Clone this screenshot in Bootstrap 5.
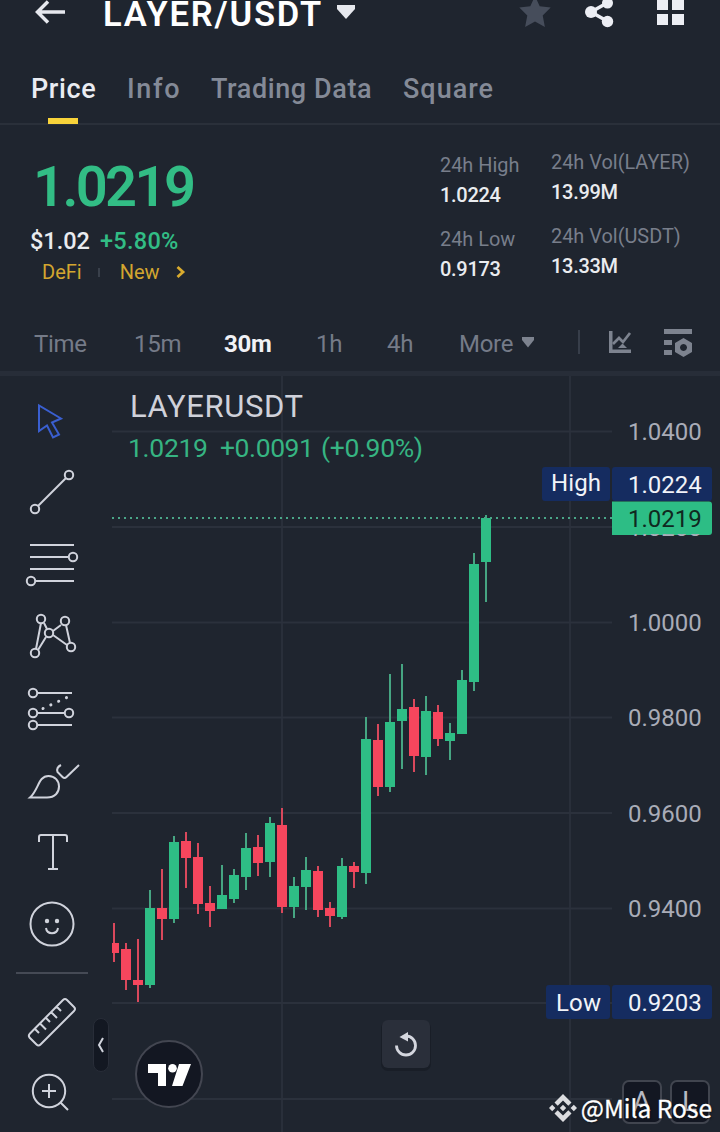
<!DOCTYPE html>
<html lang="en">
<head>
<meta charset="utf-8">
<meta name="viewport" content="width=device-width, initial-scale=1">
<title>LAYER/USDT</title>
<link href="https://cdn.jsdelivr.net/npm/bootstrap@5.3.0/dist/css/bootstrap.min.css" rel="stylesheet">
<style>
  body { background:#1f252f; color:#eaecef; font-family:Roboto,"Liberation Sans",sans-serif; width:720px; height:1132px; overflow:hidden; line-height:1; white-space:nowrap; }
  svg { display:block; flex:none; }
  .top-bar { height:52px; }
  .pair { font-size:34.5px; font-weight:600; letter-spacing:1.8px; color:#fff; line-height:40px; margin-top:-6px; width:234px; margin-left:37px; }
  .tabs { height:73px; border-bottom:2px solid #2a303a; font-size:27px; font-weight:500; letter-spacing:.6px; color:#848a97; padding-left:31px; line-height:32px; padding-top:21px; }
  .tab-on { color:#eaecf2; position:relative; }
  .tab-on::after { content:""; position:absolute; left:17px; top:45px; width:30px; height:6px; background:#f8d33a; }
  .summary { height:187px; }
  .up { color:#32bd85; }
  .quote { width:440px; padding-left:31px; }
  .last-price { font-size:56px; font-weight:600; line-height:60px; margin-top:32px; letter-spacing:-2.6px; padding-left:2px; }
  .fiat { font-size:23.5px; font-weight:500; line-height:28px; margin-top:10px; gap:10px; margin-left:-1px; }
  .fiat .up { letter-spacing:.3px; }
  .tags { font-size:20px; line-height:24px; margin-top:5px; color:#d3a62f; padding-left:11px; }
  .tags .bar { width:2px; height:9px; background:#39404b; }
  .stat-name { font-size:19.9px; line-height:24px; color:#787e8b; }
  .stat-num { font-size:20px; line-height:24px; font-weight:500; letter-spacing:-.3px; margin-top:5px; margin-bottom:21px; }
  .intervals { height:64px; border-bottom:5px solid #272d38; font-size:24px; color:#757b88; padding-left:34px; }
  .intervals div { padding-top:4px; letter-spacing:-.3px; }
  .intervals .on { color:#f1f2f6; font-weight:700; }
  .chart { height:756px; }
  .tools { width:104px; padding-top:9px; position:relative; }
  .tools svg { fill:none; stroke:#d0d3dc; stroke-width:2; }
  .tools .rule { height:2px; background:#454a55; margin:11px 16px; }
  .handle { position:absolute; left:93px; top:642px; width:16px; height:54px; border-radius:8px; background:#131822; border:1px solid #282d38; z-index:2; }
  .plot { position:relative; width:616px; }
  .plot text { font-family:Roboto,"Liberation Sans",sans-serif; }
  .watermark { position:absolute; right:8px; bottom:5px; font:24.500px/38px "Noto Sans CJK SC",sans-serif; color:#fff; gap:4px; text-shadow:1px 1px 2px #0008; -webkit-text-stroke:.3px #fff; }
</style>
</head>
<body>
<header class="top-bar d-flex">
  <svg width="66" height="28" fill="none" stroke="#e6e8ee" stroke-width="3.5"><path d="M65 12H38M48 1.500 37.500 12 48 22.500"/></svg>
  <div class="pair">LAYER/USDT</div>
  <svg width="382" height="30" viewBox="337 0 382 30">
    <path d="M337 5h18v4l-9 10-9-10z" fill="#e6e8ee"/>
    <path d="M535-4l4.700 10.200 11 1.300-8 8 2.200 11.500L535 21.500 525.100 27l2.200-11.500-8-8 11-1.300z" fill="#464d5b"/>
    <g fill="#eceef4"><circle cx="591" cy="12" r="6"/><circle cx="607.500" cy="3" r="5.500"/><circle cx="607.500" cy="21.500" r="5.700"/><path d="M607 3 591 12l16 9" fill="none" stroke="#eceef4" stroke-width="3.500"/>
    <path d="M657-2h11v12h-11zM672-2h12v12h-12zM657 14h11v11h-11zM672 14h12v11h-12z"/></g>
  </svg>
</header>
<nav class="tabs d-flex">
  <div class="tab-on" style="width:96px">Price</div><div style="width:84px;letter-spacing:1.700px">Info</div><div style="width:192px">Trading Data</div><div style="letter-spacing:1px">Square</div>
</nav>
<section class="summary d-flex">
  <div class="quote">
    <div class="last-price up">1.0219</div>
    <div class="fiat d-flex"><span>$1.02</span><span class="up">+5.80%</span></div>
    <div class="tags d-flex align-items-center"><span>DeFi</span><i class="bar ms-3"></i><span class="ms-3 ps-1">New</span>
      <svg class="ms-3" width="10" height="14" fill="none" stroke="#d9ab2e" stroke-width="2.800"><path d="M1.500 2 7 7 1.500 12"/></svg></div>
  </div>
  <div style="width:111px;padding-top:29px">
    <div class="stat-name">24h High</div><div class="stat-num">1.0224</div>
    <div class="stat-name">24h Low</div><div class="stat-num">0.9173</div>
  </div>
  <div style="padding-top:26px">
    <div class="stat-name">24h Vol(LAYER)</div><div class="stat-num">13.99M</div>
    <div class="stat-name">24h Vol(USDT)</div><div class="stat-num">13.33M</div>
  </div>
</section>
<nav class="intervals d-flex align-items-center">
  <div style="width:100px">Time</div><div style="width:90px">15m</div><div class="on" style="width:92px">30m</div><div style="width:71px">1h</div><div style="width:72px">4h</div><div style="width:61px">More</div>
  <svg width="200" height="60" viewBox="520 312 200 60" fill="#7d838f">
    <path d="M522 337h12v3l-6 7.500-6-7.500z"/><path d="M578 330h2v24h-2z" fill="#373e4a"/>
    <path d="M609 331h3.500v18.500H631V353h-22z"/><path d="M613 344l6-6 4 4 7-9" fill="none" stroke="#7d838f" stroke-width="2.700"/><path d="M618 348l4.500-4.500 4.500 4.500z"/>
    <path d="M664 329h28v5h-28zM664 340h8v5h-8zM664 350h8v5h-8z"/><path fill-rule="evenodd" d="M683.500 338l8.500 5v9l-8.500 5-8.500-5v-9zM683.500 344a3.500 3.500 0 1 0 .01 0z"/>
  </svg>
</nav>
<main class="chart d-flex">
  <aside class="tools">
    <svg width="104" height="72" viewBox="0 385 104 72"><path d="M39 405.500v25.500l8-5.500 6 12 6-3-7-12 9-4z" style="stroke:#3a5fd0"/></svg>
    <svg width="104" height="72" viewBox="0 457 104 72"><path d="M38 506l28-28"/><circle cx="35" cy="509" r="4.200"/><circle cx="69" cy="475" r="4.200"/></svg>
    <svg width="104" height="72" viewBox="0 529 104 72"><path d="M30 545h44M30 557h38M30 569h44M36 581h38"/><circle cx="73" cy="557" r="4.200"/><circle cx="31" cy="581" r="4.200"/></svg>
    <svg width="104" height="72" viewBox="0 601 104 72"><path d="M41 623l-5 26M44 623l3 6M38 650l8-13M53 631l8-6M66 625l4 18M53 635l14 10"/><circle cx="41" cy="619" r="4.200"/><circle cx="65" cy="621" r="4.200"/><circle cx="49" cy="633" r="4.200"/><circle cx="35" cy="653" r="4.200"/><circle cx="71" cy="647" r="4.200"/></svg>
    <svg width="104" height="72" viewBox="0 673 104 72"><path d="M37 693h35M37 713h27M37 725h35"/><path d="M43 708.500l26-12" stroke-width="3" stroke-linecap="round" stroke-dasharray=".1 8.500"/><circle cx="33" cy="693" r="4.200"/><circle cx="33" cy="713" r="4.200"/><circle cx="69" cy="713" r="4.200"/><circle cx="33" cy="725" r="4.200"/></svg>
    <svg width="104" height="72" viewBox="0 745 104 72"><path d="M30 797.500c9-8 8-21.500 18.500-21.500 6.500 0 10.500 5 10.500 10.500 0 6-4 11-12 11zM61 765c-4 2-4.500 4-3.500 7l5 5q2 2 4 0L79 765"/></svg>
    <svg width="104" height="72" viewBox="0 817 104 72"><path d="M39 842v-5q0-2 2-2h24q2 0 2 2v5M53 835v34M48 869h10"/></svg>
    <svg width="104" height="72" viewBox="0 889 104 72"><circle cx="52" cy="924" r="21.500"/><path d="M46 928c1 7 11 7 12 0"/><g fill="#d0d3dc" stroke="none"><circle cx="47" cy="921" r="2.200"/><circle cx="57" cy="921" r="2.200"/></g></svg>
    <div class="rule"></div>
    <svg width="104" height="72" viewBox="0 985 104 72"><path d="M30 1033.500 63 1000q2-2 4 0l7 7q2 2 0 4l-33.500 33.500q-2 2-4 0l-7-7q-1.500-2 .5-4zM35 1029l4 4M40 1023.500l6 6M46 1018l4 4M51 1012l6 6M57 1007l4 4"/></svg>
    <svg width="104" height="72" viewBox="0 1057 104 72"><circle cx="49" cy="1091" r="16.200"/><path d="M49 1084v14M42 1091h14M60.500 1102.500l7.500 7.500"/></svg>
    <div class="handle"><svg width="14" height="52"><path d="M9 19 5 26l4 7"/></svg></div>
  </aside>
  <div class="plot">
    <svg width="616" height="756" viewBox="104 376 616 756">
      <path d="M112 431.500h500M112 527h500M112 622.500h500M112 717.500h500M112 813h500M112 908.500h500M112 1003h500M112 1099h500M282 376v756M570 376v756" stroke="#2b313c" stroke-width="1.800" fill="none"/>
      <g id="candles"></g>
      <path d="M112 518h500" stroke="#4aa688" stroke-width="2" stroke-dasharray="2 4"/>
      <g font-size="31" fill="#cfd1da"><text x="130" y="417" textLength="173">LAYERUSDT</text></g>
      <g font-size="26.500" fill="#36b482"><text x="128" y="457" textLength="80">1.0219</text><text x="220" y="457" textLength="94">+0.0091</text><text x="321" y="457" textLength="102">(+0.90%)</text></g>
      <g fill="#152c60"><rect x="542" y="467" width="68" height="34" rx="3"/><rect x="612" y="467" width="100" height="34" rx="3"/><rect x="546" y="985" width="64" height="34" rx="3"/><rect x="612" y="985" width="100" height="34" rx="3"/></g>
      <path d="M612 501.500h97q3 0 3 3v27.500q0 3-3 3h-97z" fill="#2dbd85"/>
      <svg x="612" y="534" width="108" height="4" viewBox="612 534 108 4"><text x="628" y="535.500" font-size="24" fill="#a9acb7">1.0200</text></svg>
      <g font-size="24" fill="#a9acb7"><text x="628" y="440">1.0400</text><text x="628" y="631">1.0000</text><text x="628" y="726">0.9800</text><text x="628" y="822">0.9600</text><text x="628" y="917">0.9400</text></g>
      <g font-size="24" fill="#f1f3f8"><text x="551" y="491" textLength="50">High</text><text x="628" y="493">1.0224</text><text x="556" y="1011" textLength="45">Low</text><text x="628" y="1011">0.9203</text><text x="628" y="527" fill="#10281f">1.0219</text></g>
      <circle cx="169" cy="1074" r="33" fill="#131722" stroke="#434651" stroke-width="2"/>
      <path d="M148 1064h18v22h-8v-13h-10zM179 1064h12l-8.500 22H172z" fill="#fff"/><circle cx="172.500" cy="1068.300" r="4.300" fill="#fff"/>
      <rect x="381" y="1021" width="50" height="50" rx="7" fill="#191e27"/><rect x="382" y="1020" width="48" height="48" rx="6" fill="#2a2f3a"/>
      <path d="M396.500 1045.500a9.500 9.500 0 1 0 9.500-9.500" fill="none" stroke="#d4d6de" stroke-width="2.800"/><path d="M399.500 1037l8.500-5v9.500z" fill="#d4d6de"/>
      <g fill="#131722" stroke="#41454f" stroke-width="2"><rect x="623" y="1081" width="38" height="42" rx="6"/><rect x="671" y="1081" width="38" height="42" rx="6"/></g>
      <g font-size="28" fill="#b6b8c1"><text x="632.500" y="1111">A</text><text x="682" y="1111">L</text></g>
    </svg>
    <div class="watermark d-flex align-items-center">
      <svg width="28" height="28" viewBox="0 0 28 28" fill="#dcdde0"><path d="M14 0l8.500 8.500-3.200 3.200L14 6.400l-5.300 5.300-3.200-3.200zM14 28l8.500-8.500-3.200-3.200-5.300 5.300-5.300-5.300-3.200 3.200zM0 14l3.200-3.200L6.400 14l-3.200 3.200zM21.600 14l3.200-3.200L28 14l-3.200 3.200zM10.800 14l3.200-3.200 3.200 3.200-3.200 3.200z"/></svg>
      <span>@Mila Rose</span>
    </div>
  </div>
</main>
<script src="https://cdn.jsdelivr.net/npm/bootstrap@5.3.0/dist/js/bootstrap.bundle.min.js"></script>
<script>
  // Each candle: rising flag, body top, body bottom, wick top, wick bottom
  const candles = [
    [0,943,953,923,962],[0,949,980,943,990],[0,980,985,939,1002],[1,908,985,890,988],[0,908,919,869,940],
    [1,842,919,836,923],[0,841,858,832,888],[0,857,904,843,914],[0,903,911,886,927],[1,895,909,865,909],
    [1,875,899,869,903],[1,848,877,833,890],[0,847,863,835,876],[1,823,862,817,877],[0,825,907,808,913],
    [1,886,907,877,918],[1,870,887,857,910],[0,871,910,866,917],[0,908,916,902,927],[1,866,917,858,919],
    [0,866,872,862,888],[1,739,873,717,884],[0,740,787,724,796],[1,722,787,674,792],[1,709,721,664,769],
    [0,707,756,699,772],[1,711,757,696,775],[0,712,739,705,746],[1,733,741,723,760],[1,680,734,670,734],
    [1,564,682,553,691],[1,518,562,515,602]
  ];
  document.getElementById('candles').innerHTML = candles.map(([up, t, b, wt, wb], i) => {
    const x = 114 + i * 12, left = Math.max(112, x - 5);
    return `<path d="M${x - 1} ${wt}h2V${wb}h-2z" fill="${up ? '#46a582' : '#d9485c'}"/><path d="M${left} ${t}H${x + 5}V${b}H${left}z" fill="${up ? '#2ebd85' : '#f6465d'}"/>`;
  }).join('');
</script>
</body>
</html>
